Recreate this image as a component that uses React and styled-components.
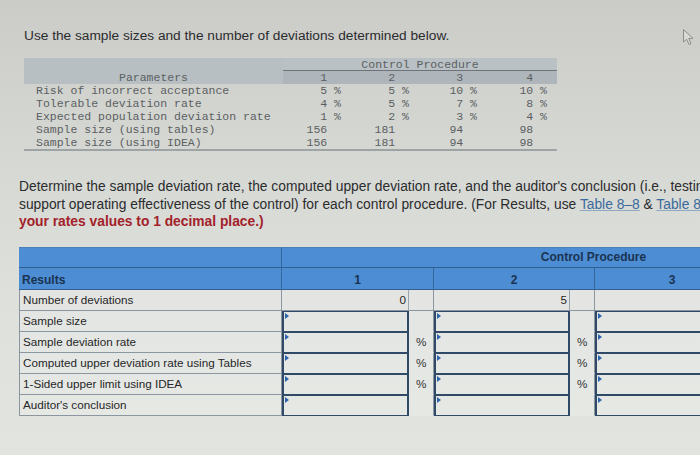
import styled, { createGlobalStyle } from "styled-components";

const GlobalStyle = createGlobalStyle`
  html, body {
    margin: 0;
    padding: 0;
  }
  body {
    width: 700px;
    height: 455px;
    overflow: hidden;
    background: linear-gradient(180deg, #cbccc8 0%, #d6d8d4 35%, #dfe1dd 70%, #e2e4e0 100%);
    font-family: "Liberation Sans", Arial, sans-serif;
  }
`;

const params = [
  { label: "Risk of incorrect acceptance", values: ["5 %", "5 %", "10 %", "10 %"] },
  { label: "Tolerable deviation rate", values: ["4 %", "5 %", "7 %", "8 %"] },
  { label: "Expected population deviation rate", values: ["1 %", "2 %", "3 %", "4 %"] },
  { label: "Sample size (using tables)", values: ["156  ", "181  ", "94  ", "98  "] },
  { label: "Sample size (using IDEA)", values: ["156  ", "181  ", "94  ", "98  "] },
];

const results = [
  { label: "Number of deviations", given: ["0", "5", "", ""] },
  { label: "Sample size" },
  { label: "Sample deviation rate", pct: true },
  { label: "Computed upper deviation rate using Tables", pct: true },
  { label: "1-Sided upper limit using IDEA", pct: true },
  { label: "Auditor's conclusion" },
];

const procedures = ["1", "2", "3", "4"];

function App() {
  return (
    <Page>
      <GlobalStyle />
      <Title>Use the sample sizes and the number of deviations determined below.</Title>

      <MonoTable>
        <ParamHead>Parameters</ParamHead>
        <GroupHead>Control Procedure</GroupHead>
        {procedures.map((p) => (
          <NumHead key={p}>{p + "  "}</NumHead>
        ))}
        {params.map((row) => (
          <MonoRow key={row.label}>
            <MonoLabel>{row.label}</MonoLabel>
            {row.values.map((v, i) => (
              <MonoValue key={i}>{v}</MonoValue>
            ))}
          </MonoRow>
        ))}
      </MonoTable>

      <Para>
        <Line>
          Determine the sample deviation rate, the computed upper deviation rate, and the auditor's
          conclusion (i.e., testing results support or do not support)
        </Line>
        <Line>
          support operating effectiveness of the control) for each control procedure. (For Results,
          use <DocLink>Table 8–8</DocLink> &amp; <DocLink>Table 8–9</DocLink>. <Strong>Round</Strong>
        </Line>
        <Line>
          <Strong>your rates values to 1 decimal place.)</Strong>
        </Line>
      </Para>

      <Results>
        <HeadCell divider />
        <HeadCell span={8} center>
          Control Procedure
        </HeadCell>
        <HeadCell divider second>
          Results
        </HeadCell>
        {procedures.map((p) => (
          <HeadCell key={p} span={2} center second divider>
            {p}
          </HeadCell>
        ))}

        {results.map((row) => (
          <ResultRow key={row.label}>
            <LabelCell>{row.label}</LabelCell>
            {procedures.map((p, i) => (
              <Pair key={p}>
                {row.given ? (
                  <GivenCell>{row.given[i]}</GivenCell>
                ) : (
                  <EntryCell>
                    <AnswerBox />
                  </EntryCell>
                )}
                <PctCell given={!!row.given}>{row.pct ? "%" : ""}</PctCell>
              </Pair>
            ))}
          </ResultRow>
        ))}
      </Results>

      <Cursor width="14" height="18" viewBox="0 0 14 18">
        <path
          d="M1.5 1.5 L1.5 14 L4.6 11.2 L7 16.5 L9 15.6 L6.7 10.4 L11 10.4 Z"
          fill="#d9dad6"
          stroke="#8c8e8b"
          strokeWidth="1"
          strokeLinejoin="round"
        />
      </Cursor>
    </Page>
  );
}

export default App;

const Page = styled.div`
  position: relative;
  width: 700px;
  height: 455px;
  overflow: hidden;
`;

const Title = styled.h1`
  margin: 0;
  padding: 27px 0 0 24px;
  font-size: 13.7px;
  line-height: 17px;
  font-weight: 400;
  color: #2b2c2d;
  white-space: nowrap;
`;

const MonoTable = styled.div`
  display: grid;
  grid-template-columns: 259px 68px 68px 68px 70px;
  grid-template-rows: 13px 13px;
  width: 533px;
  margin: 14px 0 0 24px;
  font-family: "Liberation Mono", "Courier New", monospace;
  font-size: 11.5px;
  line-height: 13px;
  color: #5b5f62;
  border-bottom: 2px solid #9ea3a6;
`;

const ParamHead = styled.div`
  grid-row: span 2;
  display: flex;
  align-items: flex-end;
  justify-content: center;
  background: #b8bfc3;
`;

const GroupHead = styled.div`
  grid-column: span 4;
  text-align: center;
  background: #bac1c5;
  border-bottom: 1px solid #6d7378;
  box-sizing: border-box;
`;

const NumHead = styled.div`
  text-align: right;
  padding-right: 10px;
  white-space: pre;
  background: #aeb6bb;
`;

const MonoRow = styled.div`
  display: contents;
`;

const MonoLabel = styled.div`
  padding-left: 12px;
  white-space: pre;
`;

const MonoValue = styled.div`
  text-align: right;
  padding-right: 10px;
  white-space: pre;
`;

const Para = styled.div`
  margin: 27px 0 0 19px;
  font-size: 13.8px;
  line-height: 17.5px;
  color: #2b2c2d;
`;

const Line = styled.div`
  white-space: nowrap;
`;

const DocLink = styled.span`
  color: #3a6a9c;
  text-decoration: underline;
  text-decoration-color: #8fa7c0;
`;

const Strong = styled.span`
  font-weight: 700;
  color: #a3222a;
`;

const Results = styled.div`
  display: grid;
  grid-template-columns: 263px 127px 25px 136px 25px 130px 25px 130px 25px;
  grid-template-rows: 21px 22px;
  grid-auto-rows: 21px;
  margin: 16px 0 0 19px;
  width: 886px;
  font-size: 11.7px;
  color: #262728;
`;

const HeadCell = styled.div`
  grid-column: span ${(p) => p.span || 1};
  display: flex;
  align-items: ${(p) => (p.second ? "flex-end" : "center")};
  justify-content: ${(p) => (p.center ? "center" : "flex-start")};
  padding: ${(p) => (p.second ? "0 3px 2px" : "0 3px")};
  background: #4d8dd3;
  color: #1a3352;
  font-weight: 700;
  font-size: 12px;
  border-right: ${(p) => (p.divider ? "1px solid #35679b" : "none")};
  border-bottom: 1px solid #2f5e8f;
  border-top: ${(p) => (p.second ? "none" : "1px solid #4a7fb8")};
  box-sizing: border-box;
`;

const ResultRow = styled.div`
  display: contents;
`;

const Pair = styled.div`
  display: contents;
`;

const LabelCell = styled.div`
  display: flex;
  align-items: center;
  padding-left: 3px;
  border-left: 1px solid #8b96a1;
  border-right: 1px solid #8b96a1;
  border-bottom: 1px solid #8b96a1;
  background: rgba(255, 255, 255, 0.18);
  box-sizing: border-box;
  white-space: nowrap;
`;

const GivenCell = styled.div`
  display: flex;
  align-items: center;
  justify-content: flex-end;
  padding-right: 2px;
  border-right: 1px solid #9aa4ae;
  border-bottom: 1px solid #8b96a1;
  background: rgba(255, 255, 255, 0.18);
  box-sizing: border-box;
`;

const EntryCell = styled.div`
  display: flex;
  background: rgba(255, 255, 255, 0.18);
`;

const AnswerBox = styled.div`
  position: relative;
  flex: 1;
  border: 1px solid #2f4967;
  border-left-width: 2px;
  border-right-width: 2px;

  &::before {
    content: "";
    position: absolute;
    top: 1px;
    left: 1px;
    border-left: 4px solid #2b64ad;
    border-top: 3px solid transparent;
    border-bottom: 3px solid transparent;
  }
`;

const PctCell = styled.div`
  display: flex;
  align-items: center;
  padding-left: 7px;
  border-right: 1px solid #8b96a1;
  border-bottom: 1px solid ${(p) => (p.given ? "#8b96a1" : "transparent")};
  background: rgba(255, 255, 255, 0.18);
  box-sizing: border-box;
  color: #333;
`;

const Cursor = styled.svg`
  position: absolute;
  left: 682px;
  top: 28px;
`;
